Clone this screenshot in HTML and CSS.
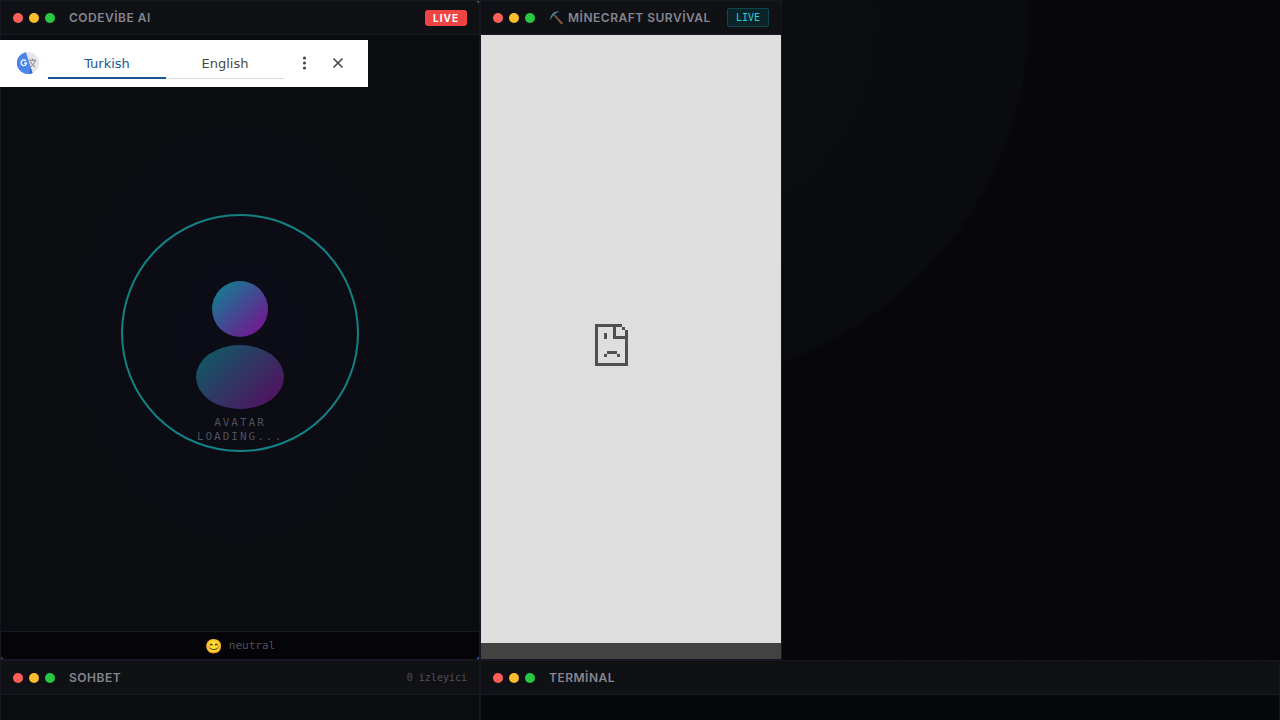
FILE: index.html
```html
<!DOCTYPE html>
<html lang="tr">
<head>
    <meta charset="UTF-8">
    <meta name="viewport" content="width=device-width, initial-scale=1">
    <title>CodeVibe AI</title>
    <link rel="stylesheet" href="styles.css">
</head>
<body>
<main class="stream">
    <section class="panel avatar-panel">
        <header class="panel-header">
            <div class="dots"><i class="dot red"></i><i class="dot yellow"></i><i class="dot green"></i></div>
            <h2 class="panel-title">CODEVİBE AI</h2>
            <span class="live-badge">LIVE</span>
        </header>
        <div class="avatar-stage">
            <div class="avatar-ring">
                <div class="avatar-head"></div>
                <div class="avatar-body"></div>
                <p class="avatar-text">AVATAR LOADING...</p>
            </div>
        </div>
        <footer class="mood"><span class="mood-emoji">😊</span><span>neutral</span></footer>
    </section>

    <section class="game-area">
        <div class="panel game-panel">
            <header class="panel-header">
                <div class="dots"><i class="dot red"></i><i class="dot yellow"></i><i class="dot green"></i></div>
                <h2 class="panel-title"><span class="title-emoji">⛏️</span> MİNECRAFT SURVİVAL</h2>
                <span class="status-badge">LIVE</span>
            </header>
            <div class="game-view">
                <svg width="33" height="42" viewBox="0 0 33 42" fill="#505050" shape-rendering="crispEdges">
                    <path d="M0 0h27v3H3v36h27V15H18V3h3v9h9V6h3v36H0zM27 3h3v3h-3z"/>
                    <path d="M9 9h3v6H9zM12 27h10v3H12zM9 30h3v3H9zM22 30h3v3h-3z"/>
                </svg>
            </div>
            <div class="game-bar"></div>
        </div>
    </section>

    <section class="panel chat-panel">
        <header class="panel-header">
            <div class="dots"><i class="dot red"></i><i class="dot yellow"></i><i class="dot green"></i></div>
            <h2 class="panel-title">SOHBET</h2>
            <span class="viewers">0 izleyici</span>
        </header>
    </section>

    <section class="panel terminal-panel">
        <header class="panel-header">
            <div class="dots"><i class="dot red"></i><i class="dot yellow"></i><i class="dot green"></i></div>
            <h2 class="panel-title">TERMİNAL</h2>
        </header>
    </section>
</main>

<div class="translate-bar">
    <svg class="translate-logo" width="22" height="22" viewBox="0 0 22 22">
        <circle cx="11" cy="11" r="11" fill="#e4e6e9"/>
        <path d="M9 0.2A11 11 0 1 0 15.5 21L9 0.2z" fill="#4a86e8"/>
        <path d="M13.5 15.5l2 5.5-3 .9z" fill="#3367d6"/>
        <path d="M9 9A2.8 2.8 0 1 0 9.6 11.2H7" fill="none" stroke="#fff" stroke-width="1.2"/>
        <path d="M12.2 8.2h7M15.5 6.7v1.5M18 8.4c-.6 3-2.3 5-4.6 6.6M13.6 9.5c.8 2.4 2.5 4.2 4.8 5.4" fill="none" stroke="#7b8085" stroke-width="1"/>
    </svg>
    <div class="tabs">
        <button class="tab active" type="button">Turkish</button>
        <button class="tab" type="button">English</button>
    </div>
    <button class="icon-btn" type="button" aria-label="Options">
        <svg width="16" height="16" viewBox="0 0 16 16" fill="#474747">
            <circle cx="7.5" cy="3" r="1.6"/><circle cx="7.5" cy="8" r="1.6"/><circle cx="7.5" cy="13" r="1.6"/>
        </svg>
    </button>
    <button class="icon-btn" type="button" aria-label="Close">
        <svg width="16" height="16" viewBox="0 0 16 16" fill="none" stroke="#474747" stroke-width="1.6">
            <path d="M3.5 3.5l9 9M12.5 3.5l-9 9"/>
        </svg>
    </button>
</div>
</body>
</html>
```

FILE: styles.css
```css
* {
    box-sizing: border-box;
}

body {
    margin: 0;
    color: #85858f;
    font-family: Inter, "Noto Sans", sans-serif;
    background-color: #07070b;
    /* cyan glow over a faint 60px grid */
    background-image:
        radial-gradient(ellipse 390px 370px at 50% 20px, #0b0e10, #090b0e 99%, transparent 100%),
        linear-gradient(rgba(255, 255, 255, 0.006) 1px, transparent 1px),
        linear-gradient(90deg, rgba(255, 255, 255, 0.006) 1px, transparent 1px);
    background-size: auto, 60px 60px, 60px 60px;
}

.stream {
    display: grid;
    grid-template-columns: 3fr 5fr;
    grid-template-rows: 1fr 60px;
    height: 100vh;
    overflow: hidden;
}

.panel {
    display: flex;
    flex-direction: column;
    background: #0b0c10;
    border: 1px solid #161722;
}

.panel-header {
    display: flex;
    flex: none;
    align-items: center;
    height: 34px;
    padding: 0 12px;
    background: #101115;
    border-bottom: 1px solid #191a26;
}

.dots {
    display: flex;
    gap: 6px;
    margin-right: 14px;
}

.dot {
    width: 10px;
    height: 10px;
    border-radius: 50%;
}

.red { background: #ff5f57; }
.yellow { background: #febc2e; }
.green { background: #28c840; }

.panel-title {
    flex: 1;
    margin: 0;
    font-size: 12px;
    font-weight: 600;
    letter-spacing: 0.5px;
    white-space: nowrap;
}

.title-emoji {
    opacity: 0.8;
}

.live-badge {
    padding: 0 8px;
    border-radius: 3px;
    background: #f04444;
    color: #fff;
    font-size: 10px;
    font-weight: 700;
    line-height: 16px;
    letter-spacing: 1px;
}

.status-badge {
    padding: 0 8px;
    border: 1px solid #0e484e;
    border-radius: 2px;
    background: #0a2429;
    color: #25d0d4;
    font-family: "DejaVu Sans Mono", monospace;
    font-size: 10px;
    line-height: 17px;
}

.viewers {
    color: #50505a;
    font-family: "DejaVu Sans Mono", monospace;
    font-size: 10px;
}

.avatar-panel {
    background:
        linear-gradient(#0b0c10, #0b0c10) top left / 50% 50% no-repeat,
        linear-gradient(#6d7a6a, #6d7a6a) top right / 50% 50% no-repeat,
        linear-gradient(90deg, #7a2f8c 50%, #3f6fb5 50%);
}

.avatar-panel .panel-header {
    border-radius: 4px 4px 0 0;
}

.avatar-stage {
    display: flex;
    flex: 1;
    align-items: center;
    justify-content: center;
    background: radial-gradient(ellipse 36% 36% at center, #0b0c16, #0b0c13 90%, #0b0c10 100%);
}

.avatar-ring {
    display: flex;
    flex-direction: column;
    align-items: center;
    width: 238px;
    height: 238px;
    padding-top: 65px;
    border: 2px solid #138286;
    border-radius: 50%;
}

.avatar-head {
    flex: none;
    width: 56px;
    height: 56px;
    margin-bottom: 8px;
    border-radius: 50%;
    background: linear-gradient(135deg, #088a92, #800890);
}

.avatar-body {
    flex: none;
    width: 88px;
    height: 64px;
    margin-bottom: 7px;
    border-radius: 50%;
    background: linear-gradient(135deg, #0a6165, #5a0961);
}

.avatar-text {
    width: 88px;
    margin: 0;
    color: #50505a;
    font-family: "DejaVu Sans Mono", monospace;
    font-size: 11px;
    line-height: 14px;
    letter-spacing: 2px;
    text-align: center;
}

.mood {
    display: flex;
    align-items: center;
    justify-content: center;
    gap: 7px;
    height: 28px;
    border-top: 1px solid #191a26;
    border-radius: 0 0 4px 4px;
    background: #050509;
    color: #50505a;
    font-family: "DejaVu Sans Mono", monospace;
    font-size: 11px;
}

.mood-emoji {
    font-size: 14px;
}

/* game */
.game-area {
    display: flex;
}

.game-panel {
    width: 302px;
}

.game-view {
    display: flex;
    flex: 1;
    align-items: center;
    justify-content: center;
    padding: 12px 39px 0 0;
    background: #dedede;
}

.game-bar {
    height: 16px;
    background: #424242;
}

.terminal-panel {
    background: #07080c;
}

.chat-panel,
.terminal-panel {
    border-bottom: 0;
}

/* translate popup */
.translate-bar {
    position: absolute;
    top: 40px;
    left: 0;
    display: flex;
    align-items: center;
    width: 368px;
    height: 47px;
    padding: 0 0 1px 17px;
    background: #fff;
}

.tabs {
    display: flex;
    margin: 0 4px 0 9px;
}

.tab {
    width: 118px;
    height: 32px;
    padding: 0;
    border: 0;
    background: none;
    box-shadow: inset 0 -1px #dadce0;
    color: #474747;
    font-family: "DejaVu Sans", sans-serif;
    font-size: 13px;
}

.tab.active {
    box-shadow: inset 0 -2px #1b5594;
    color: #1b5594;
}

.icon-btn {
    display: flex;
    align-items: center;
    justify-content: center;
    width: 33px;
    height: 32px;
    padding: 0;
    border: 0;
    background: none;
}
```
